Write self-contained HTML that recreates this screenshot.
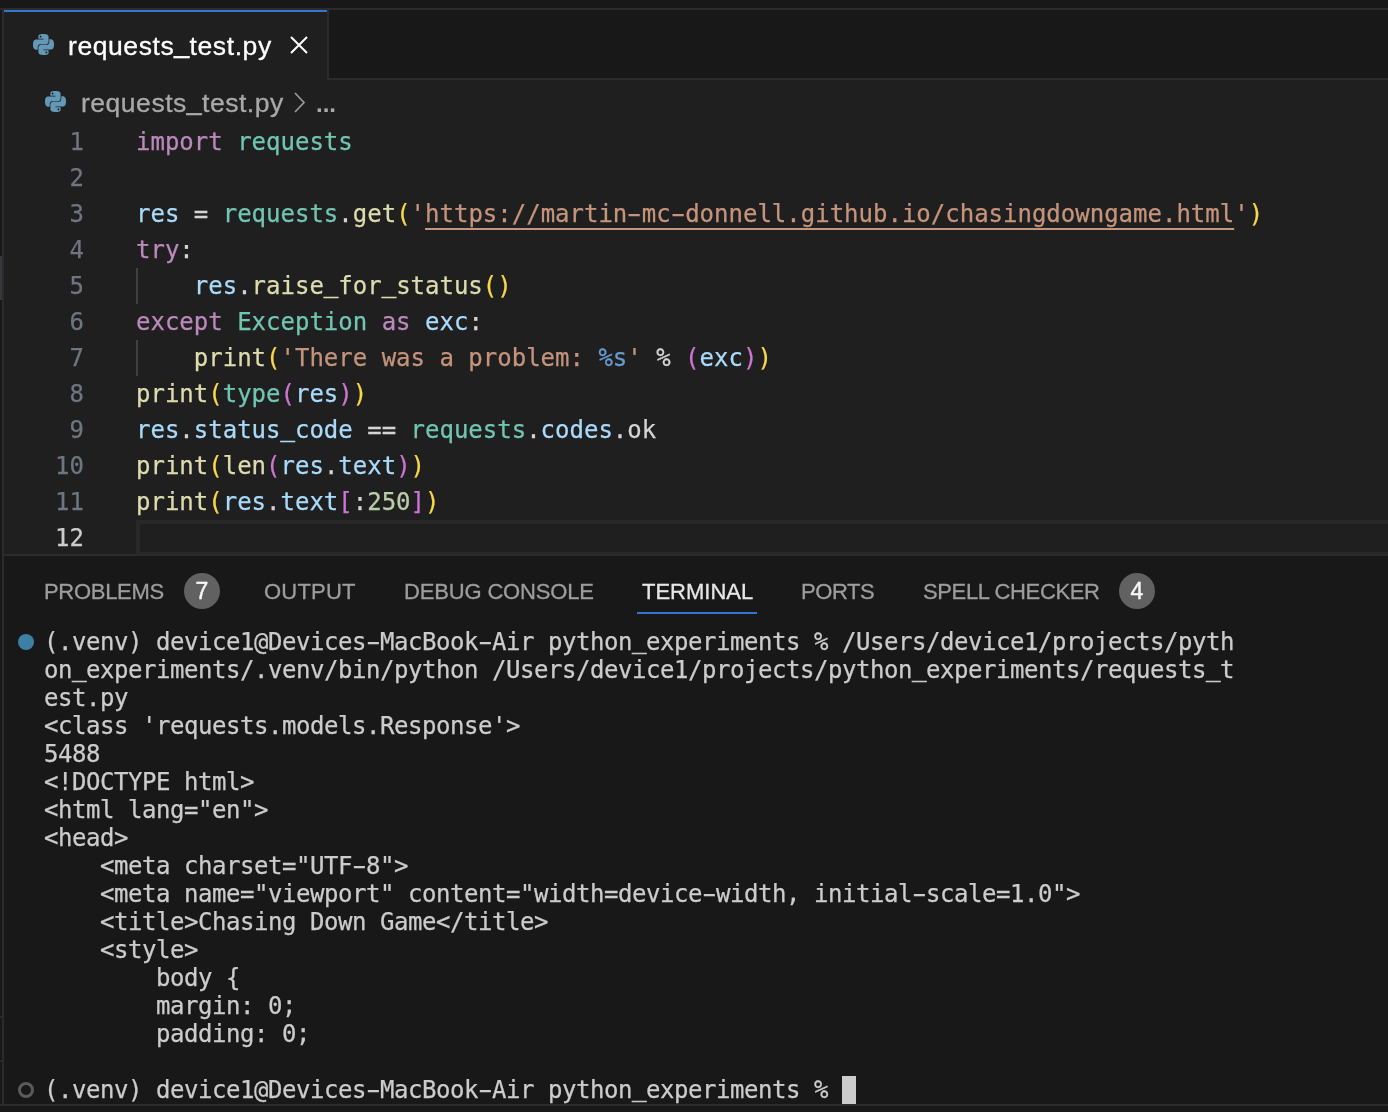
<!DOCTYPE html>
<html lang="en">
<head>
<meta charset="utf-8">
<title>requests_test.py</title>
<style>
html,body{margin:0;padding:0;}
body{width:1388px;height:1112px;overflow:hidden;background:#181818;position:relative;
  font-family:"Liberation Sans",sans-serif;color:#cccccc;}
.abs{position:absolute;}
.ui,.code,.term,.pt,.badge{will-change:transform;}
#topline{left:0;top:8px;width:1388px;height:2px;background:#2b2b2b;}
#leftline{left:2px;top:10px;width:2px;height:1094px;background:#2b2b2b;}
#sidesel{left:0;top:256px;width:2px;height:44px;background:#37373d;}
.sideln{left:0;width:2px;height:2px;background:#2b2b2b;}
#tabbar{left:4px;top:10px;width:1384px;height:68px;background:#181818;border-bottom:2px solid #2b2b2b;}
#tab{left:4px;top:10px;width:323px;height:70px;background:#1f1f1f;border-right:2px solid #2b2b2b;}
#tabtop{left:4px;top:10px;width:323px;height:2px;background:#3376cd;}
#editor{left:4px;top:80px;width:1384px;height:474px;background:#1f1f1f;overflow:hidden;}
.ui{font-size:26.5px;line-height:30px;white-space:pre;letter-spacing:0.52px;-webkit-text-stroke:0.3px currentColor;}
#tabtitle{left:68px;top:31px;color:#ffffff;letter-spacing:0.58px;}
#bctitle{left:81px;top:88px;color:#a9a9a9;}
#bcdots{left:315.5px;top:89px;color:#a9a9a9;font-size:24px;font-weight:bold;letter-spacing:0;-webkit-text-stroke:0;}
.code{font-family:"DejaVu Sans Mono","Liberation Mono",monospace;font-size:24px;white-space:pre;-webkit-text-stroke:0.25px currentColor;}
.ln{left:4px;width:80px;text-align:right;color:#6e7681;height:36px;line-height:36px;}
.ln.act{color:#cccccc;}
.cl{left:136px;height:36px;line-height:36px;color:#d4d4d4;}
.k{color:#bc89bd}.t{color:#71c6b1}.v{color:#aadafa}.f{color:#dcdcaf}.s{color:#c5947c}
.b1{color:#f9d849}.b2{color:#cc76d1}.b3{color:#4a9df8}.n{color:#bacdab}.fm{color:#679ad1}
.u{text-decoration:underline;text-decoration-thickness:2px;text-underline-offset:6px;}
.us{position:relative;top:-2.3px;-webkit-text-stroke:0.6px currentColor;}
.hy{display:inline-block;transform:scaleX(1.75);}
.u{text-decoration-skip-ink:none;}
.u .hy{text-decoration:underline;text-decoration-thickness:2px;text-underline-offset:6px;}
.us2{position:relative;top:-2px;-webkit-text-stroke:0.7px currentColor;}
.guide{left:136px;width:2px;height:36px;background:#404040;}
#curline{left:136px;top:520px;width:1260px;height:28px;border:4px solid #282828;}
#panelline{left:4px;top:554px;width:1384px;height:2px;background:#2b2b2b;}
#panel{left:4px;top:556px;width:1384px;height:548px;background:#181818;}
#botline{left:0;top:1104px;width:1388px;height:2px;background:#2b2b2b;}
.pt{font-size:22px;line-height:26px;top:579px;color:#9d9d9d;white-space:pre;-webkit-text-stroke:0.3px currentColor;}
.pt.on{color:#e7e7e7;}
#ptline{left:637px;top:612px;width:120px;height:2px;background:#3376cd;}
.badge{top:573px;width:36px;height:36px;border-radius:18px;background:#616161;color:#f8f8f8;
  font-size:23px;line-height:36px;text-align:center;-webkit-text-stroke:0.4px currentColor;}
.term{font-family:"DejaVu Sans Mono","Liberation Mono",monospace;font-size:24px;white-space:pre;
  letter-spacing:-0.45px;left:44px;height:28px;line-height:28px;color:#cccccc;-webkit-text-stroke:0.25px currentColor;}
#cursor{left:842px;top:1076px;width:14px;height:28px;background:#cccccc;}
#dot1{left:18px;top:634px;width:16px;height:16px;border-radius:8px;background:#3e7fa4;}
#dot2{left:18px;top:1082px;width:10px;height:10px;border-radius:8px;border:3px solid #5a5a5a;}
</style>
</head>
<body>
<div class="abs" id="topline"></div>
<div class="abs" id="leftline"></div>
<div class="abs" id="sidesel"></div>
<div class="abs sideln" style="top:1016px"></div>
<div class="abs sideln" style="top:1060px"></div>
<div class="abs" id="tabbar"></div>
<div class="abs" id="editor"></div>
<div class="abs" id="tab"></div>
<div class="abs" id="tabtop"></div>

<!-- tab -->
<svg class="abs" style="left:33px;top:34px" width="21" height="21" viewBox="0 0 24 24"><path fill="#6398b7" d="M14.25.18l.9.2.73.26.59.3.45.32.34.34.25.34.16.33.1.3.04.26.02.2-.01.13V8.5l-.05.63-.13.55-.21.46-.26.38-.3.31-.33.25-.35.19-.35.14-.33.1-.3.07-.26.04-.21.02H8.77l-.69.05-.59.14-.5.22-.41.27-.33.32-.27.35-.2.36-.15.37-.1.35-.07.32-.04.27-.02.21v3.06H3.17l-.21-.03-.28-.07-.32-.12-.35-.18-.36-.26-.36-.36-.35-.46-.32-.59-.28-.73-.21-.88-.14-1.05-.05-1.23.06-1.22.16-1.04.24-.87.32-.71.36-.57.4-.44.42-.33.42-.24.4-.16.36-.1.32-.05.24-.01h.16l.06.01h8.16v-.83H6.18l-.01-2.75-.02-.37.05-.34.11-.31.17-.28.25-.26.31-.23.38-.2.44-.18.51-.15.58-.12.64-.1.71-.06.77-.04.84-.02 1.27.05zm-6.3 1.98l-.23.33-.08.41.08.41.23.34.33.22.41.09.41-.09.33-.22.23-.34.08-.41-.08-.41-.23-.33-.33-.22-.41-.09-.41.09zm13.09 3.95l.28.06.32.12.35.18.36.27.36.35.35.47.32.59.28.73.21.88.14 1.04.05 1.23-.06 1.23-.16 1.04-.24.86-.32.71-.36.57-.4.45-.42.33-.42.24-.4.16-.36.09-.32.05-.24.02-.16-.01h-8.22v.82h5.84l.01 2.76.02.36-.05.34-.11.31-.17.29-.25.25-.31.24-.38.2-.44.17-.51.15-.58.13-.64.09-.71.07-.77.04-.84.01-1.27-.04-1.07-.14-.9-.2-.73-.25-.59-.3-.45-.33-.34-.34-.25-.34-.16-.33-.1-.3-.04-.25-.02-.2.01-.13v-5.34l.05-.64.13-.54.21-.46.26-.38.3-.32.33-.24.35-.2.35-.14.33-.1.3-.06.26-.04.21-.02.13-.01h5.84l.69-.05.59-.14.5-.21.41-.28.33-.32.27-.35.2-.36.15-.36.1-.35.07-.32.04-.28.02-.21V6.07h2.09l.14.01zm-6.47 14.25l-.23.33-.08.41.08.41.23.33.33.23.41.08.41-.08.33-.23.23-.33.08-.41-.08-.41-.23-.33-.33-.23-.41-.08-.41.08z"/></svg>
<div class="abs ui" id="tabtitle">requests<span class="us2">_</span>test.py</div>
<svg class="abs" style="left:289px;top:35px" width="20" height="20" viewBox="0 0 20 20"><path d="M2 2L18 18M18 2L2 18" stroke="#ffffff" stroke-width="2" fill="none"/></svg>

<!-- breadcrumb -->
<svg class="abs" style="left:45px;top:91px" width="21" height="21" viewBox="0 0 24 24"><path fill="#6398b7" d="M14.25.18l.9.2.73.26.59.3.45.32.34.34.25.34.16.33.1.3.04.26.02.2-.01.13V8.5l-.05.63-.13.55-.21.46-.26.38-.3.31-.33.25-.35.19-.35.14-.33.1-.3.07-.26.04-.21.02H8.77l-.69.05-.59.14-.5.22-.41.27-.33.32-.27.35-.2.36-.15.37-.1.35-.07.32-.04.27-.02.21v3.06H3.17l-.21-.03-.28-.07-.32-.12-.35-.18-.36-.26-.36-.36-.35-.46-.32-.59-.28-.73-.21-.88-.14-1.05-.05-1.23.06-1.22.16-1.04.24-.87.32-.71.36-.57.4-.44.42-.33.42-.24.4-.16.36-.1.32-.05.24-.01h.16l.06.01h8.16v-.83H6.18l-.01-2.75-.02-.37.05-.34.11-.31.17-.28.25-.26.31-.23.38-.2.44-.18.51-.15.58-.12.64-.1.71-.06.77-.04.84-.02 1.27.05zm-6.3 1.98l-.23.33-.08.41.08.41.23.34.33.22.41.09.41-.09.33-.22.23-.34.08-.41-.08-.41-.23-.33-.33-.22-.41-.09-.41.09zm13.09 3.95l.28.06.32.12.35.18.36.27.36.35.35.47.32.59.28.73.21.88.14 1.04.05 1.23-.06 1.23-.16 1.04-.24.86-.32.71-.36.57-.4.45-.42.33-.42.24-.4.16-.36.09-.32.05-.24.02-.16-.01h-8.22v.82h5.84l.01 2.76.02.36-.05.34-.11.31-.17.29-.25.25-.31.24-.38.2-.44.17-.51.15-.58.13-.64.09-.71.07-.77.04-.84.01-1.27-.04-1.07-.14-.9-.2-.73-.25-.59-.3-.45-.33-.34-.34-.25-.34-.16-.33-.1-.3-.04-.25-.02-.2.01-.13v-5.34l.05-.64.13-.54.21-.46.26-.38.3-.32.33-.24.35-.2.35-.14.33-.1.3-.06.26-.04.21-.02.13-.01h5.84l.69-.05.59-.14.5-.21.41-.28.33-.32.27-.35.2-.36.15-.36.1-.35.07-.32.04-.28.02-.21V6.07h2.09l.14.01zm-6.47 14.25l-.23.33-.08.41.08.41.23.33.33.23.41.08.41-.08.33-.23.23-.33.08-.41-.08-.41-.23-.33-.33-.23-.41-.08-.41.08z"/></svg>
<div class="abs ui" id="bctitle">requests<span class="us2">_</span>test.py</div>
<svg class="abs" style="left:292px;top:91px" width="16" height="24" viewBox="0 0 16 24"><path d="M3 2L12 11.5L3 21" stroke="#9a9a9a" stroke-width="1.7" fill="none"/></svg>
<div class="abs ui" id="bcdots">...</div>

<div class="abs" id="curline"></div>
<div class="abs guide" style="top:268px"></div>
<div class="abs guide" style="top:340px"></div>
<div class="abs code ln" style="top:124px">1</div>
<div class="abs code ln" style="top:160px">2</div>
<div class="abs code ln" style="top:196px">3</div>
<div class="abs code ln" style="top:232px">4</div>
<div class="abs code ln" style="top:268px">5</div>
<div class="abs code ln" style="top:304px">6</div>
<div class="abs code ln" style="top:340px">7</div>
<div class="abs code ln" style="top:376px">8</div>
<div class="abs code ln" style="top:412px">9</div>
<div class="abs code ln" style="top:448px">10</div>
<div class="abs code ln" style="top:484px">11</div>
<div class="abs code ln act" style="top:520px">12</div>
<div class="abs code cl" style="top:124px"><span class="k">import</span> <span class="t">requests</span></div>
<div class="abs code cl" style="top:196px"><span class="v">res</span> = <span class="t">requests</span>.<span class="f">get</span><span class="b1">(</span><span class="s">'<span class="u">https://martin<span class="hy">-</span>mc<span class="hy">-</span>donnell.github.io/chasingdowngame.html</span>'</span><span class="b1">)</span></div>
<div class="abs code cl" style="top:232px"><span class="k">try</span>:</div>
<div class="abs code cl" style="top:268px">    <span class="v">res</span>.<span class="f">raise<span class="us">_</span>for<span class="us">_</span>status</span><span class="b1">()</span></div>
<div class="abs code cl" style="top:304px"><span class="k">except</span> <span class="t">Exception</span> <span class="k">as</span> <span class="v">exc</span>:</div>
<div class="abs code cl" style="top:340px">    <span class="f">print</span><span class="b1">(</span><span class="s">'There was a problem: <span class="fm">%s</span>'</span> % <span class="b2">(</span><span class="v">exc</span><span class="b2">)</span><span class="b1">)</span></div>
<div class="abs code cl" style="top:376px"><span class="f">print</span><span class="b1">(</span><span class="t">type</span><span class="b2">(</span><span class="v">res</span><span class="b2">)</span><span class="b1">)</span></div>
<div class="abs code cl" style="top:412px"><span class="v">res</span>.<span class="v">status<span class="us">_</span>code</span> == <span class="t">requests</span>.<span class="v">codes</span>.ok</div>
<div class="abs code cl" style="top:448px"><span class="f">print</span><span class="b1">(</span><span class="f">len</span><span class="b2">(</span><span class="v">res</span>.<span class="v">text</span><span class="b2">)</span><span class="b1">)</span></div>
<div class="abs code cl" style="top:484px"><span class="f">print</span><span class="b1">(</span><span class="v">res</span>.<span class="v">text</span><span class="b2">[</span>:<span class="n">250</span><span class="b2">]</span><span class="b1">)</span></div>

<div class="abs" id="panel"></div>
<div class="abs" id="panelline"></div>
<div class="abs" id="botline"></div>
<div class="abs pt" style="left:44px;letter-spacing:-0.3px">PROBLEMS</div>
<div class="abs badge" style="left:184px">7</div>
<div class="abs pt" style="left:264px;letter-spacing:0.2px">OUTPUT</div>
<div class="abs pt" style="left:404px;letter-spacing:-0.16px">DEBUG CONSOLE</div>
<div class="abs pt on" style="left:642px">TERMINAL</div>
<div class="abs" id="ptline"></div>
<div class="abs pt" style="left:801px;letter-spacing:-0.4px">PORTS</div>
<div class="abs pt" style="left:923px;letter-spacing:-0.37px">SPELL CHECKER</div>
<div class="abs badge" style="left:1119px">4</div>
<div class="abs" id="dot1"></div>
<div class="abs term" style="top:628px">(.venv) device1@Devices<span class="hy">-</span>MacBook<span class="hy">-</span>Air python<span class="us">_</span>experiments % /Users/device1/projects/pyth</div>
<div class="abs term" style="top:656px">on<span class="us">_</span>experiments/.venv/bin/python /Users/device1/projects/python<span class="us">_</span>experiments/requests<span class="us">_</span>t</div>
<div class="abs term" style="top:684px">est.py</div>
<div class="abs term" style="top:712px">&lt;class 'requests.models.Response'&gt;</div>
<div class="abs term" style="top:740px">5488</div>
<div class="abs term" style="top:768px">&lt;!DOCTYPE html&gt;</div>
<div class="abs term" style="top:796px">&lt;html lang="en"&gt;</div>
<div class="abs term" style="top:824px">&lt;head&gt;</div>
<div class="abs term" style="top:852px">    &lt;meta charset="UTF<span class="hy">-</span>8"&gt;</div>
<div class="abs term" style="top:880px">    &lt;meta name="viewport" content="width=device<span class="hy">-</span>width, initial<span class="hy">-</span>scale=1.0"&gt;</div>
<div class="abs term" style="top:908px">    &lt;title&gt;Chasing Down Game&lt;/title&gt;</div>
<div class="abs term" style="top:936px">    &lt;style&gt;</div>
<div class="abs term" style="top:964px">        body {</div>
<div class="abs term" style="top:992px">        margin: 0;</div>
<div class="abs term" style="top:1020px">        padding: 0;</div>
<div class="abs term" style="top:1076px">(.venv) device1@Devices<span class="hy">-</span>MacBook<span class="hy">-</span>Air python<span class="us">_</span>experiments % </div>
<div class="abs" id="dot2"></div>
<div class="abs" id="cursor"></div>

</body>
</html>
